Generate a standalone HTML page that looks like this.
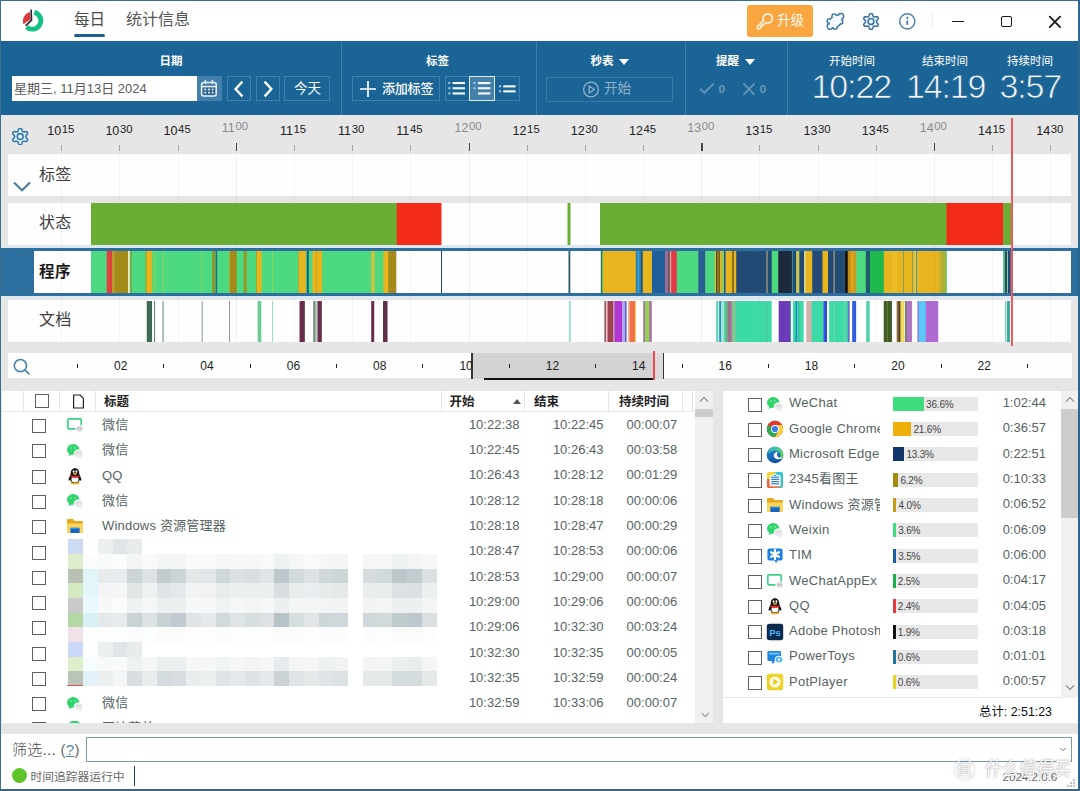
<!DOCTYPE html><html lang="zh-CN"><head><meta charset="utf-8"><title>ManicTime</title><style>

*{box-sizing:border-box;margin:0;padding:0}
html,body{width:1080px;height:791px;overflow:hidden;background:#e6e6e6}
body{font-family:"Liberation Sans", "Noto Sans CJK SC", sans-serif;position:relative;color:#333;font-size:13px}
.a{position:absolute}
.t{position:absolute;white-space:nowrap;line-height:1}
#titlebar{left:0;top:0;width:1080px;height:41px;background:#fff}
#toolbar{left:0;top:41px;width:1080px;height:74px;background:#1b6596}
.tl{position:absolute;color:#fff;font-size:11.5px;line-height:14px;white-space:nowrap;transform:translateX(-50%);font-weight:700}
.btn{position:absolute;border:1px solid #3f80ad;top:76px;height:24.9px}
.vsep{position:absolute;top:41px;width:1px;height:74px;background:#3f7fab}
.big{position:absolute;color:#f4f8fb;font-size:34px;line-height:32px;white-space:nowrap;top:70px;letter-spacing:-1.15px;font-weight:400;-webkit-text-stroke:0.75px #1b6596}
.row{position:absolute;left:8px;width:1063px;height:42px;background:#fefefe}
.rl{position:absolute;left:39px;font-size:16px;line-height:18px;color:#3e3e3e;white-space:nowrap;letter-spacing:0.2px}
.hr{position:absolute;font-size:12.5px;line-height:12px;color:#222;white-space:nowrap}
.hr i{font-style:normal;font-size:11.3px;position:relative;top:-1.8px;margin-left:0.6px}
.hr.g{color:#8a8a8a}
.tick{position:absolute;width:1px;background:#a6a6a6;top:145px;height:6px}
.grid{position:absolute;width:1px;background:rgba(0,0,0,0.035);top:154px;height:188px}
.seg{position:absolute;top:0;height:100%}
.mt{position:absolute;font-size:12px;line-height:12px;color:#222;top:360px;transform:translateX(-50%)}
.mtick{position:absolute;width:1px;height:4px;top:364px;background:#222}
.cb{position:absolute;width:14px;height:14px;border:1px solid #606060;background:#fff}
.cell{position:absolute;font-size:13px;line-height:16px;color:#566363;white-space:nowrap}
.cellr{position:absolute;font-size:13px;line-height:16px;color:#566363;white-space:nowrap;text-align:right;width:80px}
.th{position:absolute;font-size:12.5px;line-height:16px;color:#222;font-weight:700;white-space:nowrap;top:394px}
.csep{position:absolute;width:1px;top:391px;height:20px;background:#e4e4e4}
.pbar{position:absolute;left:893px;width:85px;height:14px;background:#e8e8e8}
.pfill{position:absolute;left:0;top:0;height:100%}
.ptxt{position:absolute;top:0;font-size:10px;line-height:15px;color:#444;white-space:nowrap;letter-spacing:-0.2px}

</style></head><body>
<div id="titlebar" class="a">
<svg class="a" style="left:20px;top:7px" width="27" height="27" viewBox="0 0 27 27">
<path d="M14.4 5.4 A8.5 8.5 0 1 1 6.6 19.9" fill="none" stroke="#12c282" stroke-width="4.8"/>
<path d="M3.4 17.2 C1.6 11.8 4.6 6.6 9.8 5 L10.6 12.4 Z" fill="#dc3b42"/>
<path d="M11.1 2.6 L11.5 13.2 L5.6 18.8" fill="none" stroke="#2c2636" stroke-width="1.7" stroke-linejoin="miter"/>
</svg>
<div class="t" style="left:74px;top:11px;font-size:15.5px;line-height:18px;color:#4a4a4a">每日</div>
<div class="a" style="left:74px;top:33.5px;width:31px;height:3.2px;border-radius:2px;background:#1d5f8f"></div>
<div class="t" style="left:126px;top:11px;font-size:16px;line-height:18px;color:#555">统计信息</div>
<div class="a" style="left:747px;top:5px;width:66px;height:32px;border-radius:3px;background:#f9a640"></div>
<svg class="a" style="left:756px;top:12px" width="18" height="18" viewBox="0 0 18 18" fill="none" stroke="#fff4e2" stroke-width="1.6" stroke-linecap="round" stroke-linejoin="round">
<path d="M7.6 8.4 A4.6 4.6 0 1 1 9.8 10.6 L8.4 12.2 L6.6 12.2 L6.6 14 L4.8 14 L4.8 15.8 L3.4 16.8 L1.4 16.8 L1.4 14.6 Z"/></svg>
<div class="t" style="left:777px;top:13px;font-size:13.5px;line-height:16px;color:#fff8ee">升级</div>
<svg class="a" style="left:826px;top:11.5px" width="19" height="19" viewBox="0 0 19 19"><g fill="#34709f" stroke="#34709f" stroke-width="3" stroke-linejoin="round"><circle cx="14.69" cy="9.86" r="1.35"/><circle cx="14.90" cy="4.29" r="1.95"/><circle cx="8.17" cy="4.16" r="1.35"/><circle cx="3.42" cy="8.97" r="1.45"/><circle cx="3.93" cy="14.52" r="1.95"/><circle cx="9.12" cy="14.99" r="1.35"/><ellipse cx="9.50" cy="9.50" rx="6.7" ry="4.3" transform="rotate(-44 9.50 9.50)"/><circle cx="9.50" cy="9.50" r="4.5"/></g><g fill="#f4fbfe" stroke="#f4fbfe" stroke-width="0.3"><circle cx="14.69" cy="9.86" r="1.35"/><circle cx="14.90" cy="4.29" r="1.95"/><circle cx="8.17" cy="4.16" r="1.35"/><circle cx="3.42" cy="8.97" r="1.45"/><circle cx="3.93" cy="14.52" r="1.95"/><circle cx="9.12" cy="14.99" r="1.35"/><ellipse cx="9.50" cy="9.50" rx="6.7" ry="4.3" transform="rotate(-44 9.50 9.50)"/><circle cx="9.50" cy="9.50" r="4.5"/></g></svg>
<svg class="a" style="left:862px;top:12.5px" width="18" height="17" viewBox="0 0 18 16.7" fill="#f2fafd" stroke="#34709f" stroke-width="1.5" stroke-linejoin="round"><path d="M14.40 8.35 L14.45 7.99 L14.64 7.61 L15.01 7.15 L15.52 6.60 L15.98 5.98 L16.22 5.36 L16.21 4.80 L16.01 4.30 L15.68 3.89 L15.20 3.60 L14.54 3.49 L13.77 3.58 L13.04 3.74 L12.46 3.84 L12.04 3.81 L11.70 3.67 L11.42 3.45 L11.18 3.09 L10.97 2.55 L10.75 1.83 L10.44 1.12 L10.02 0.61 L9.53 0.33 L9.00 0.25 L8.47 0.33 L7.98 0.61 L7.56 1.12 L7.25 1.83 L7.03 2.55 L6.82 3.09 L6.58 3.45 L6.30 3.67 L5.96 3.81 L5.54 3.84 L4.96 3.74 L4.23 3.58 L3.46 3.49 L2.80 3.60 L2.32 3.89 L1.99 4.30 L1.79 4.80 L1.78 5.36 L2.02 5.98 L2.48 6.60 L2.99 7.15 L3.36 7.61 L3.55 7.99 L3.60 8.35 L3.55 8.71 L3.36 9.09 L2.99 9.55 L2.48 10.10 L2.02 10.72 L1.78 11.34 L1.79 11.90 L1.99 12.40 L2.32 12.81 L2.80 13.10 L3.46 13.21 L4.23 13.12 L4.96 12.96 L5.54 12.86 L5.96 12.89 L6.30 13.03 L6.58 13.25 L6.82 13.61 L7.03 14.15 L7.25 14.87 L7.56 15.58 L7.98 16.09 L8.47 16.37 L9.00 16.45 L9.53 16.37 L10.02 16.09 L10.44 15.58 L10.75 14.87 L10.97 14.15 L11.18 13.61 L11.42 13.25 L11.70 13.03 L12.04 12.89 L12.46 12.86 L13.04 12.96 L13.77 13.12 L14.54 13.21 L15.20 13.10 L15.68 12.81 L16.01 12.40 L16.21 11.90 L16.22 11.34 L15.98 10.72 L15.52 10.10 L15.01 9.55 L14.64 9.09 L14.45 8.71 Z"/><circle cx="9" cy="8.35" r="2.9"/></svg>
<svg class="a" style="left:898px;top:12px" width="19" height="19" viewBox="0 0 19 19" fill="none" stroke="#4a82b0" stroke-width="1.5">
<circle cx="9.3" cy="9.3" r="7.6"/><path d="M9.3 8.6 L9.3 12.8" stroke-width="1.8" stroke="#3a76a8"/><circle cx="9.3" cy="5.9" r="1.05" fill="#3a76a8" stroke="none"/></svg>
<div class="a" style="left:932px;top:13px;width:1px;height:16px;background:#ececec"></div>
<div class="a" style="left:952px;top:21px;width:12px;height:1.4px;background:#1a1a1a"></div>
<div class="a" style="left:1001px;top:16px;width:11.4px;height:11.4px;border:1.7px solid #1a1a1a;border-radius:2px"></div>
<svg class="a" style="left:1048px;top:15px" width="14" height="14" viewBox="0 0 14 14" stroke="#1a1a1a" stroke-width="1.8" stroke-linecap="round"><path d="M1.7 1.7 L12.1 12.1 M12.1 1.7 L1.7 12.1"/></svg>
</div>
<div id="toolbar" class="a"></div>
<div class="vsep" style="left:341px"></div>
<div class="vsep" style="left:535.5px"></div>
<div class="vsep" style="left:684.5px"></div>
<div class="vsep" style="left:786.5px"></div>
<div class="tl" style="left:171px;top:54px">日期</div>
<div class="tl" style="left:437.5px;top:54px">标签</div>
<div class="tl" style="left:602px;top:54px">秒表</div>
<div class="a" style="left:619px;top:59px;width:0;height:0;border-left:5.5px solid transparent;border-right:5.5px solid transparent;border-top:6px solid #fff"></div>
<div class="tl" style="left:727.5px;top:54px">提醒</div>
<div class="a" style="left:744.5px;top:59px;width:0;height:0;border-left:5.5px solid transparent;border-right:5.5px solid transparent;border-top:6px solid #fff"></div>
<div class="tl" style="left:852px;top:54px;font-weight:400">开始时间</div>
<div class="tl" style="left:945px;top:54px;font-weight:400">结束时间</div>
<div class="tl" style="left:1030px;top:54px;font-weight:400">持续时间</div>
<div class="a" style="left:12px;top:76px;width:185px;height:25px;background:#fff"></div>
<div class="t" style="left:14px;top:81px;font-size:13px;line-height:16px;color:#5a5a5a;letter-spacing:0">星期三, 11月13日 2024</div>
<div class="a" style="left:197px;top:76px;width:25px;height:25px;background:#447fab"></div>
<svg class="a" style="left:200px;top:79px" width="18" height="19" viewBox="0 0 18 19" fill="none" stroke="#e8f1f8" stroke-width="1.5" stroke-linejoin="round">
<rect x="2.4" y="8" width="13" height="8.4" fill="#33668f" stroke="none"/><rect x="1.6" y="3.4" width="14.6" height="13.6" rx="2"/><path d="M1.6 7.6 L16.2 7.6"/><path d="M5.4 1.4 L5.4 4.6 M12.4 1.4 L12.4 4.6" stroke-linecap="round"/>
<g fill="#e8f1f8" stroke="none"><rect x="4.4" y="9.6" width="1.7" height="1.7"/><rect x="8.1" y="9.6" width="1.7" height="1.7"/><rect x="11.8" y="9.6" width="1.7" height="1.7"/><rect x="4.4" y="12.8" width="1.7" height="1.7"/><rect x="8.1" y="12.8" width="1.7" height="1.7"/><rect x="11.8" y="12.8" width="1.7" height="1.7"/></g></svg>
<div class="btn" style="left:227px;width:24px"></div>
<svg class="a" style="left:227px;top:76px" width="24" height="26" viewBox="0 0 24 26" fill="none" stroke="#fff" stroke-width="2.3"><path d="M15.4 5.6 L8.6 13 L15.4 20.4"/></svg>
<div class="btn" style="left:255.5px;width:24px"></div>
<svg class="a" style="left:255.5px;top:76px" width="24" height="26" viewBox="0 0 24 26" fill="none" stroke="#fff" stroke-width="2.3"><path d="M8.6 5.6 L15.4 13 L8.6 20.4"/></svg>
<div class="btn" style="left:284px;width:46px"></div>
<div class="t" style="left:294px;top:81px;font-size:13.5px;line-height:16px;color:#fff">今天</div>
<div class="btn" style="left:352px;width:88px"></div>
<svg class="a" style="left:359px;top:80px" width="18" height="18" viewBox="0 0 18 18" stroke="#fff" stroke-width="1.7"><path d="M9 1 L9 17 M1 9 L17 9"/></svg>
<div class="t" style="left:382px;top:81px;font-size:13px;line-height:16px;color:#fff;font-weight:500;letter-spacing:-0.2px">添加标签</div>
<div class="btn" style="left:444.5px;width:75px"></div>
<div class="a" style="left:469px;top:76px;width:26px;height:24.9px;border:1.6px solid #dcebf4;background:#4580aa"></div>
<svg class="a" style="left:0;top:0" width="540" height="110" viewBox="0 0 540 110" fill="#f4f9fc"><rect x="448.3" y="82" width="2" height="2" fill="#a6cfee"/><rect x="452.6" y="82" width="12.4" height="2.1"/><rect x="448.3" y="87.2" width="2" height="2" fill="#a6cfee"/><rect x="452.6" y="87.2" width="12.4" height="2.1"/><rect x="448.3" y="92.4" width="2" height="2" fill="#a6cfee"/><rect x="452.6" y="92.4" width="12.4" height="2.1"/></svg>
<svg class="a" style="left:0;top:0" width="540" height="110" viewBox="0 0 540 110" fill="#f4f9fc"><rect x="473.5" y="82" width="2" height="2" fill="#a6cfee"/><rect x="478" y="82" width="12.4" height="2.1"/><rect x="473.5" y="87.2" width="2" height="2" fill="#a6cfee"/><rect x="478" y="87.2" width="12.4" height="2.1"/><rect x="478" y="92.4" width="12.4" height="2.1"/></svg>
<svg class="a" style="left:0;top:0" width="540" height="110" viewBox="0 0 540 110" fill="#f4f9fc"><rect x="499" y="85.3" width="2" height="2" fill="#a6cfee"/><rect x="503.2" y="85.3" width="12.4" height="2.1"/><rect x="499" y="90.3" width="2" height="2" fill="#a6cfee"/><rect x="503.2" y="90.3" width="12.4" height="2.1"/></svg>
<div class="btn" style="left:546px;top:77.4px;width:127px;height:24.3px;border-color:#3a79a6"></div>
<svg class="a" style="left:582px;top:80px" width="19" height="19" viewBox="0 0 19 19" fill="none" stroke="#8fb2cc" stroke-width="1.3"><circle cx="9" cy="9.5" r="7.4"/><path d="M7.2 6 L12.4 9.5 L7.2 13 Z" stroke-linejoin="round"/></svg>
<div class="t" style="left:604px;top:81px;font-size:13.5px;line-height:16px;color:#8fb2cc">开始</div>
<svg class="a" style="left:699px;top:82px" width="17" height="13" viewBox="0 0 17 13" fill="none" stroke="#6594b8" stroke-width="1.9"><path d="M1.2 6.8 L5.4 10.8 L14.8 1.6"/></svg>
<div class="t" style="left:718.6px;top:82.3px;font-size:11.8px;line-height:14px;color:#6c98b9;font-weight:700">0</div>
<svg class="a" style="left:742.4px;top:82px" width="14" height="14" viewBox="0 0 14 14" fill="none" stroke="#6594b8" stroke-width="1.9"><path d="M1.4 1.4 L12.6 12.8 M12.6 1.4 L1.4 12.8"/></svg>
<div class="t" style="left:759.4px;top:82.3px;font-size:11.8px;line-height:14px;color:#6c98b9;font-weight:700">0</div>
<div class="big" style="left:811.6px">10:22</div>
<div class="big" style="left:906px">14:19</div>
<div class="big" style="left:999.4px">3:57</div>
<svg class="a" style="left:11px;top:127.6px" width="18.4" height="17.2" viewBox="0 0 18 16.7" fill="#e2f1fa" stroke="#3577aa" stroke-width="1.55" stroke-linejoin="round"><path d="M14.40 8.35 L14.45 7.99 L14.64 7.61 L15.01 7.15 L15.52 6.60 L15.98 5.98 L16.22 5.36 L16.21 4.80 L16.01 4.30 L15.68 3.89 L15.20 3.60 L14.54 3.49 L13.77 3.58 L13.04 3.74 L12.46 3.84 L12.04 3.81 L11.70 3.67 L11.42 3.45 L11.18 3.09 L10.97 2.55 L10.75 1.83 L10.44 1.12 L10.02 0.61 L9.53 0.33 L9.00 0.25 L8.47 0.33 L7.98 0.61 L7.56 1.12 L7.25 1.83 L7.03 2.55 L6.82 3.09 L6.58 3.45 L6.30 3.67 L5.96 3.81 L5.54 3.84 L4.96 3.74 L4.23 3.58 L3.46 3.49 L2.80 3.60 L2.32 3.89 L1.99 4.30 L1.79 4.80 L1.78 5.36 L2.02 5.98 L2.48 6.60 L2.99 7.15 L3.36 7.61 L3.55 7.99 L3.60 8.35 L3.55 8.71 L3.36 9.09 L2.99 9.55 L2.48 10.10 L2.02 10.72 L1.78 11.34 L1.79 11.90 L1.99 12.40 L2.32 12.81 L2.80 13.10 L3.46 13.21 L4.23 13.12 L4.96 12.96 L5.54 12.86 L5.96 12.89 L6.30 13.03 L6.58 13.25 L6.82 13.61 L7.03 14.15 L7.25 14.87 L7.56 15.58 L7.98 16.09 L8.47 16.37 L9.00 16.45 L9.53 16.37 L10.02 16.09 L10.44 15.58 L10.75 14.87 L10.97 14.15 L11.18 13.61 L11.42 13.25 L11.70 13.03 L12.04 12.89 L12.46 12.86 L13.04 12.96 L13.77 13.12 L14.54 13.21 L15.20 13.10 L15.68 12.81 L16.01 12.40 L16.21 11.90 L16.22 11.34 L15.98 10.72 L15.52 10.10 L15.01 9.55 L14.64 9.09 L14.45 8.71 Z"/><circle cx="9" cy="8.35" r="2.9"/></svg>
<div class="hr" style="left:47.2px;top:124.5px">10<i>15</i></div>
<div class="tick" style="left:61.2px"></div>
<div class="hr" style="left:105.4px;top:124.5px">10<i>30</i></div>
<div class="tick" style="left:119.4px"></div>
<div class="hr" style="left:163.6px;top:124.5px">10<i>45</i></div>
<div class="tick" style="left:177.6px"></div>
<div class="hr g" style="left:221.8px;top:122px">11<i>00</i></div>
<div class="tick" style="left:235.8px;top:143px;height:8px;background:#444;width:1.4px"></div>
<div class="hr" style="left:279.9px;top:124.5px">11<i>15</i></div>
<div class="tick" style="left:293.9px"></div>
<div class="hr" style="left:338.1px;top:124.5px">11<i>30</i></div>
<div class="tick" style="left:352.1px"></div>
<div class="hr" style="left:396.3px;top:124.5px">11<i>45</i></div>
<div class="tick" style="left:410.3px"></div>
<div class="hr g" style="left:454.5px;top:122px">12<i>00</i></div>
<div class="tick" style="left:468.5px;top:143px;height:8px;background:#444;width:1.4px"></div>
<div class="hr" style="left:512.6px;top:124.5px">12<i>15</i></div>
<div class="tick" style="left:526.6px"></div>
<div class="hr" style="left:570.8px;top:124.5px">12<i>30</i></div>
<div class="tick" style="left:584.8px"></div>
<div class="hr" style="left:629.0px;top:124.5px">12<i>45</i></div>
<div class="tick" style="left:643.0px"></div>
<div class="hr g" style="left:687.2px;top:122px">13<i>00</i></div>
<div class="tick" style="left:701.2px;top:143px;height:8px;background:#444;width:1.4px"></div>
<div class="hr" style="left:745.3px;top:124.5px">13<i>15</i></div>
<div class="tick" style="left:759.3px"></div>
<div class="hr" style="left:803.5px;top:124.5px">13<i>30</i></div>
<div class="tick" style="left:817.5px"></div>
<div class="hr" style="left:861.7px;top:124.5px">13<i>45</i></div>
<div class="tick" style="left:875.7px"></div>
<div class="hr g" style="left:919.8px;top:122px">14<i>00</i></div>
<div class="tick" style="left:933.8px;top:143px;height:8px;background:#444;width:1.4px"></div>
<div class="hr" style="left:978.0px;top:124.5px">14<i>15</i></div>
<div class="tick" style="left:992.0px"></div>
<div class="hr" style="left:1036.2px;top:124.5px">14<i>30</i></div>
<div class="tick" style="left:1050.2px"></div>
<div class="a" style="left:0;top:245px;width:1080px;height:3px;background:#dde7f0"></div>
<div class="a" style="left:0;top:247.7px;width:1080px;height:48.3px;background:#2d6f9f"></div>
<div class="a" style="left:0;top:296px;width:1080px;height:2.5px;background:#dde7f0"></div>
<div class="row" style="top:154px"></div>
<div class="row" style="top:202.5px"></div>
<div class="row" style="top:251px;left:34px;width:1037px;height:42.3px"></div>
<div class="row" style="top:299.5px;height:42.5px"></div>
<div class="rl" style="top:165.6px">标签</div>
<div class="rl" style="top:214.1px">状态</div>
<div class="rl" style="top:262.8px;font-weight:700;color:#1a1a1a;font-size:15.5px;letter-spacing:0.6px">程序</div>
<div class="rl" style="top:311.1px">文档</div>
<svg class="a" style="left:13px;top:181px" width="18" height="11" viewBox="0 0 18 11" fill="none" stroke="#4a7c9f" stroke-width="2.1"><path d="M1 1.4 L9 9.2 L17 1.4"/></svg>
<div class="grid" style="left:61.2px"></div>
<div class="grid" style="left:119.4px"></div>
<div class="grid" style="left:177.6px"></div>
<div class="grid" style="left:235.8px;background:rgba(0,0,0,0.06)"></div>
<div class="grid" style="left:293.9px"></div>
<div class="grid" style="left:352.1px"></div>
<div class="grid" style="left:410.3px"></div>
<div class="grid" style="left:468.5px;background:rgba(0,0,0,0.06)"></div>
<div class="grid" style="left:526.6px"></div>
<div class="grid" style="left:584.8px"></div>
<div class="grid" style="left:643.0px"></div>
<div class="grid" style="left:701.2px;background:rgba(0,0,0,0.06)"></div>
<div class="grid" style="left:759.3px"></div>
<div class="grid" style="left:817.5px"></div>
<div class="grid" style="left:875.7px"></div>
<div class="grid" style="left:933.8px;background:rgba(0,0,0,0.06)"></div>
<div class="grid" style="left:992.0px"></div>
<div class="grid" style="left:1050.2px"></div>
<svg class="a" style="left:0;top:202.5px;" width="1080" height="42" viewBox="0 0 1080 42"><rect x="91" y="0" width="306.2" height="42" fill="#6aae35"/><rect x="396.7" y="0" width="44.8" height="42" fill="#f12b17"/><rect x="567.5" y="0" width="3" height="42" fill="#6aae35"/><rect x="600" y="0" width="347" height="42" fill="#6aae35"/><rect x="946.5" y="0" width="57.2" height="42" fill="#f12b17"/><rect x="1003.2" y="0" width="8.3" height="42" fill="#6aae35"/></svg>
<svg class="a" style="left:0;top:250.8px;" width="1080" height="42.5" viewBox="0 0 1080 42.5"><rect x="91" y="0" width="305.2" height="42.5" fill="#4dd97f"/><rect x="106.7" y="0" width="5.8" height="42.5" fill="#e0413f"/><rect x="112" y="0" width="3.5" height="42.5" fill="#b59c2c"/><rect x="115" y="0" width="13.5" height="42.5" fill="#a58a1a"/><rect x="128" y="0" width="1.7" height="42.5" fill="#f2edc8"/><rect x="130.6" y="0" width="1" height="42.5" fill="#a58a1a"/><rect x="145.6" y="0" width="1.5" height="42.5" fill="#9a9a30"/><rect x="146.6" y="0" width="5.6" height="42.5" fill="#e9b51f"/><rect x="154.4" y="0" width="0.8" height="42.5" fill="#9fcf5a"/><rect x="163" y="0" width="0.8" height="42.5" fill="#9fcf5a"/><rect x="201.4" y="0" width="0.8" height="42.5" fill="#9fcf5a"/><rect x="212" y="0" width="3.2" height="42.5" fill="#8f9a2a"/><rect x="215.6" y="0" width="1.6" height="42.5" fill="#236a98"/><rect x="229.2" y="0" width="1.1" height="42.5" fill="#c8b030"/><rect x="229.8" y="0" width="6.9" height="42.5" fill="#a58a1a"/><rect x="243.6" y="0" width="3.2" height="42.5" fill="#8f9a2a"/><rect x="256" y="0" width="1.3" height="42.5" fill="#a0a030"/><rect x="256.8" y="0" width="4.9" height="42.5" fill="#e9b51f"/><rect x="272.2" y="0" width="0.8" height="42.5" fill="#a8cf50"/><rect x="298.2" y="0" width="1.3" height="42.5" fill="#b8a830"/><rect x="299" y="0" width="6.8" height="42.5" fill="#e9b51f"/><rect x="306.8" y="0" width="2" height="42.5" fill="#1d5a80"/><rect x="312.5" y="0" width="9.7" height="42.5" fill="#e9b51f"/><rect x="316" y="0" width="0.9" height="42.5" fill="#d89a18"/><rect x="371.2" y="0" width="3.5" height="42.5" fill="#cfc23c"/><rect x="383.3" y="0" width="5.5" height="42.5" fill="#e9b51f"/><rect x="388.3" y="0" width="7.9" height="42.5" fill="#a58a1a"/><rect x="441" y="0" width="1" height="42.5" fill="#2a4a60"/><rect x="568.5" y="0" width="1.8" height="42.5" fill="#2a5a6a"/><rect x="600.8" y="0" width="2.1" height="42.5" fill="#1f7a5a"/><rect x="602.4" y="0" width="1.7" height="42.5" fill="#b8c840"/><rect x="603.6" y="0" width="32.7" height="42.5" fill="#e9b51f"/><rect x="635.8" y="0" width="5.7" height="42.5" fill="#2a7fb5"/><rect x="637.6" y="0" width="1.8" height="42.5" fill="#3f9fd0"/><rect x="641" y="0" width="2.1" height="42.5" fill="#24506e"/><rect x="642.6" y="0" width="1.3" height="42.5" fill="#c8a838"/><rect x="643.4" y="0" width="9.1" height="42.5" fill="#e9b51f"/><rect x="652" y="0" width="13.5" height="42.5" fill="#1f5f9b"/><rect x="665" y="0" width="3.8" height="42.5" fill="#a06a8c"/><rect x="668.3" y="0" width="1.8" height="42.5" fill="#4a4050"/><rect x="669.6" y="0" width="2.1" height="42.5" fill="#d9a0a0"/><rect x="671.2" y="0" width="6" height="42.5" fill="#e63946"/><rect x="676.7" y="0" width="22.1" height="42.5" fill="#4dd97f"/><rect x="698.3" y="0" width="7.5" height="42.5" fill="#265f8f"/><rect x="705.3" y="0" width="10" height="42.5" fill="#4dd97f"/><rect x="714.8" y="0" width="1.7" height="42.5" fill="#d0c040"/><rect x="716" y="0" width="4.3" height="42.5" fill="#5a4a1a"/><rect x="717.6" y="0" width="0.8" height="42.5" fill="#e0c030"/><rect x="719.8" y="0" width="2.2" height="42.5" fill="#e9b51f"/><rect x="721.5" y="0" width="3" height="42.5" fill="#8cc860"/><rect x="724" y="0" width="2.1" height="42.5" fill="#2a5a80"/><rect x="725.6" y="0" width="7.3" height="42.5" fill="#e9b51f"/><rect x="732.4" y="0" width="1.7" height="42.5" fill="#4a4020"/><rect x="733.6" y="0" width="3.1" height="42.5" fill="#e9b51f"/><rect x="736.2" y="0" width="36" height="42.5" fill="#234a75"/><rect x="766.5" y="0" width="1" height="42.5" fill="#c8b070"/><rect x="771.7" y="0" width="7" height="42.5" fill="#4dd97f"/><rect x="778.2" y="0" width="14" height="42.5" fill="#1c2a3c"/><rect x="791.7" y="0" width="5" height="42.5" fill="#234a75"/><rect x="792.2" y="0" width="0.8" height="42.5" fill="#3aa090"/><rect x="796.2" y="0" width="3.6" height="42.5" fill="#c8c850"/><rect x="799.3" y="0" width="5.4" height="42.5" fill="#234a75"/><rect x="804.2" y="0" width="1.8" height="42.5" fill="#f0e0a0"/><rect x="805.5" y="0" width="7.2" height="42.5" fill="#e9b51f"/><rect x="812.2" y="0" width="10.8" height="42.5" fill="#234a75"/><rect x="822.5" y="0" width="6" height="42.5" fill="#e9b51f"/><rect x="828" y="0" width="16.4" height="42.5" fill="#234a75"/><rect x="833.6" y="0" width="1" height="42.5" fill="#c8b070"/><rect x="843.9" y="0" width="1.3" height="42.5" fill="#4a6a8a"/><rect x="844.7" y="0" width="3.6" height="42.5" fill="#161616"/><rect x="847.8" y="0" width="3.2" height="42.5" fill="#c48a18"/><rect x="850.5" y="0" width="3.5" height="42.5" fill="#dca41c"/><rect x="853.5" y="0" width="3.3" height="42.5" fill="#cf9a20"/><rect x="856.3" y="0" width="10" height="42.5" fill="#4dd97f"/><rect x="865.8" y="0" width="4.7" height="42.5" fill="#1f5a6c"/><rect x="870" y="0" width="14.3" height="42.5" fill="#1fb84c"/><rect x="883.8" y="0" width="55" height="42.5" fill="#e9b51f"/><rect x="893" y="0" width="0.8" height="42.5" fill="#f0c840"/><rect x="895.6" y="0" width="0.8" height="42.5" fill="#f0c840"/><rect x="903" y="0" width="0.8" height="42.5" fill="#6aa070"/><rect x="912.2" y="0" width="0.8" height="42.5" fill="#6aa070"/><rect x="914" y="0" width="2.5" height="42.5" fill="#d8c850"/><rect x="916" y="0" width="0.8" height="42.5" fill="#3a90a0"/><rect x="934" y="0" width="1" height="42.5" fill="#d8a820"/><rect x="938.3" y="0" width="4.2" height="42.5" fill="#c8b028"/><rect x="942" y="0" width="4.3" height="42.5" fill="#a8b038"/><rect x="945.8" y="0" width="1" height="42.5" fill="#5fd070"/><rect x="1003.2" y="0" width="2.3" height="42.5" fill="#46b494"/><rect x="1005" y="0" width="2" height="42.5" fill="#1f5a4a"/><rect x="1007.6" y="0" width="3.2" height="42.5" fill="#234a75"/></svg>
<svg class="a" style="left:0;top:300.6px;" width="1080" height="41.6" viewBox="0 0 1080 41.6"><rect x="146.7" y="0" width="5.3" height="41.6" fill="#3f6b56"/><rect x="154.2" y="0" width="0.8" height="41.6" fill="#3a5a4a"/><rect x="162.4" y="0" width="1.2" height="41.6" fill="#7a9a8a"/><rect x="201.6" y="0" width="1" height="41.6" fill="#8a9a92"/><rect x="229.2" y="0" width="0.8" height="41.6" fill="#8a6a88"/><rect x="257.6" y="0" width="3.7" height="41.6" fill="#6dce95"/><rect x="272.2" y="0" width="0.8" height="41.6" fill="#7fd6a4"/><rect x="299.5" y="0" width="5.3" height="41.6" fill="#6a2d4c"/><rect x="313.2" y="0" width="2.7" height="41.6" fill="#6f8f7a"/><rect x="315.4" y="0" width="1.9" height="41.6" fill="#c8d8cc"/><rect x="316.8" y="0" width="1.7" height="41.6" fill="#9a8f98"/><rect x="318" y="0" width="3.8" height="41.6" fill="#6a2d4c"/><rect x="371.2" y="0" width="3" height="41.6" fill="#6a2d4c"/><rect x="383" y="0" width="4.5" height="41.6" fill="#5c3046"/><rect x="569.2" y="0" width="1.4" height="41.6" fill="#6fd8c2"/><rect x="604.4" y="0" width="2.1" height="41.6" fill="#8a5a68"/><rect x="606" y="0" width="2.1" height="41.6" fill="#f0c0c8"/><rect x="607.6" y="0" width="5.9" height="41.6" fill="#a0414f"/><rect x="613" y="0" width="2.2" height="41.6" fill="#c090b8"/><rect x="614.7" y="0" width="7.8" height="41.6" fill="#b035d2"/><rect x="622" y="0" width="3.5" height="41.6" fill="#b4a4f2"/><rect x="625" y="0" width="1.6" height="41.6" fill="#5f62c2"/><rect x="628" y="0" width="2.1" height="41.6" fill="#f2b896"/><rect x="629.6" y="0" width="5.9" height="41.6" fill="#f0714f"/><rect x="635" y="0" width="1.2" height="41.6" fill="#f4d860"/><rect x="643.3" y="0" width="2.2" height="41.6" fill="#a070a2"/><rect x="645" y="0" width="4.7" height="41.6" fill="#92d052"/><rect x="649.2" y="0" width="2.6" height="41.6" fill="#a872a0"/><rect x="716.2" y="0" width="2.2" height="41.6" fill="#5fd2b2"/><rect x="719.2" y="0" width="2.5" height="41.6" fill="#2f8fc2"/><rect x="721.2" y="0" width="3.3" height="41.6" fill="#a2e8e0"/><rect x="724" y="0" width="2" height="41.6" fill="#4ad8ac"/><rect x="725.5" y="0" width="2.8" height="41.6" fill="#70b082"/><rect x="727.8" y="0" width="4.4" height="41.6" fill="#a07292"/><rect x="731.7" y="0" width="4.6" height="41.6" fill="#82c492"/><rect x="735.8" y="0" width="35.9" height="41.6" fill="#3cdaa6"/><rect x="767" y="0" width="0.8" height="41.6" fill="#58c0a0"/><rect x="755" y="0" width="0.6" height="41.6" fill="#46dcaa"/><rect x="778.7" y="0" width="11.8" height="41.6" fill="#6a3ab8"/><rect x="790" y="0" width="1" height="41.6" fill="#3a9a8a"/><rect x="793" y="0" width="10.7" height="41.6" fill="#3cdaa6"/><rect x="795.6" y="0" width="1.4" height="41.6" fill="#2080d2"/><rect x="798.4" y="0" width="0.8" height="41.6" fill="#36a890"/><rect x="806.3" y="0" width="5.9" height="41.6" fill="#d2b2aa"/><rect x="811.7" y="0" width="12.1" height="41.6" fill="#3cdaa6"/><rect x="823.3" y="0" width="1.8" height="41.6" fill="#5672d2"/><rect x="824.6" y="0" width="2.4" height="41.6" fill="#2040e2"/><rect x="829.2" y="0" width="18.8" height="41.6" fill="#3cdaa6"/><rect x="833.8" y="0" width="0.8" height="41.6" fill="#8ad8a8"/><rect x="844.3" y="0" width="0.8" height="41.6" fill="#8ad8a8"/><rect x="847.8" y="0" width="1.9" height="41.6" fill="#6272c4"/><rect x="852.2" y="0" width="4" height="41.6" fill="#3060e2"/><rect x="866.2" y="0" width="3.5" height="41.6" fill="#52d2aa"/><rect x="883.8" y="0" width="8.2" height="41.6" fill="#3f5a25"/><rect x="886.8" y="0" width="1.4" height="41.6" fill="#5a7a30"/><rect x="896.7" y="0" width="2.3" height="41.6" fill="#907040"/><rect x="898.5" y="0" width="2.5" height="41.6" fill="#504020"/><rect x="900.5" y="0" width="4" height="41.6" fill="#f2da62"/><rect x="905" y="0" width="2.5" height="41.6" fill="#708282"/><rect x="907" y="0" width="5" height="41.6" fill="#b272c2"/><rect x="917.4" y="0" width="2.1" height="41.6" fill="#8f80e2"/><rect x="919" y="0" width="7.3" height="41.6" fill="#5cc8f8"/><rect x="925.8" y="0" width="12.5" height="41.6" fill="#b068d2"/><rect x="1005" y="0" width="0.8" height="41.6" fill="#5ab8b0"/><rect x="1006.8" y="0" width="3.4" height="41.6" fill="#40a8a0"/></svg>
<div class="a" style="left:1010.5px;top:117.5px;width:2px;height:228px;background:#ea5a5e"></div>
<div class="a" style="left:8px;top:353px;width:1063.5px;height:25.2px;background:#fefefe"></div>
<div class="a" style="left:472px;top:352.5px;width:192px;height:26.5px;background:#d2d2d2"></div>
<div class="a" style="left:654.5px;top:352.5px;width:9.5px;height:26.5px;background:#dadada"></div>
<div class="a" style="left:483.5px;top:378px;width:170.5px;height:2.2px;background:#111"></div>
<div class="a" style="left:471.4px;top:352.5px;width:1.5px;height:26px;background:#333"></div>
<div class="a" style="left:662.6px;top:352.5px;width:1.5px;height:26px;background:#333"></div>
<div class="a" style="left:653.2px;top:350.5px;width:1.5px;height:29.5px;background:#f0484d"></div>
<div class="mtick" style="left:77.0px"></div>
<div class="mt" style="left:120.7px">02</div>
<div class="mtick" style="left:163.3px"></div>
<div class="mt" style="left:207.0px">04</div>
<div class="mtick" style="left:249.7px"></div>
<div class="mt" style="left:293.4px">06</div>
<div class="mtick" style="left:336.1px"></div>
<div class="mt" style="left:379.7px">08</div>
<div class="mtick" style="left:422.4px"></div>
<div class="mt" style="left:466.1px">10</div>
<div class="mtick" style="left:508.8px"></div>
<div class="mt" style="left:552.5px">12</div>
<div class="mtick" style="left:595.1px"></div>
<div class="mt" style="left:638.8px">14</div>
<div class="mtick" style="left:681.5px"></div>
<div class="mt" style="left:725.2px">16</div>
<div class="mtick" style="left:767.9px"></div>
<div class="mt" style="left:811.5px">18</div>
<div class="mtick" style="left:854.2px"></div>
<div class="mt" style="left:897.9px">20</div>
<div class="mtick" style="left:940.6px"></div>
<div class="mt" style="left:984.3px">22</div>
<div class="mtick" style="left:1026.9px"></div>
<svg class="a" style="left:12px;top:358px" width="19" height="17" viewBox="0 0 19 17" fill="none" stroke="#4a86ae" stroke-width="1.7" stroke-linecap="round"><circle cx="8.4" cy="7.6" r="6.1"/><path d="M12.8 12 L17 15.8"/></svg>
<div class="a" style="left:2px;top:391px;width:711px;height:332px;background:#fff;overflow:hidden" id="ltab">
</div>
<div class="a" style="left:2px;top:411px;width:692px;height:1px;background:#e8e8e8"></div>
<div class="csep" style="left:22.5px"></div>
<div class="csep" style="left:58.5px"></div>
<div class="csep" style="left:94.5px"></div>
<div class="csep" style="left:440.5px"></div>
<div class="csep" style="left:524px"></div>
<div class="csep" style="left:607.8px"></div>
<div class="csep" style="left:681.5px"></div>
<div class="csep" style="left:692.3px"></div>
<div class="cb" style="left:35px;top:394.3px"></div>
<svg class="a" style="left:72px;top:394px" width="13" height="15" viewBox="0 0 13 15" fill="none" stroke="#222" stroke-width="1.2" stroke-linejoin="round"><path d="M1.6 1 L8 1 L11.4 4.4 L11.4 14 L1.6 14 Z"/></svg>
<div class="th" style="left:104px">标题</div>
<div class="th" style="left:449.5px">开始</div>
<div class="th" style="left:534px">结束</div>
<div class="th" style="left:619px">持续时间</div>
<div class="a" style="left:513px;top:399px;width:0;height:0;border-left:4.5px solid transparent;border-right:4.5px solid transparent;border-bottom:5px solid #555"></div>
<div class="a" style="left:695px;top:391px;width:18px;height:332px;background:#f0f0f0"></div>
<div class="a" style="left:695px;top:409px;width:18px;height:8.3px;background:#cdcdcd"></div>
<svg class="a" style="left:699px;top:396px" width="10" height="7" viewBox="0 0 10 7" fill="none" stroke="#8a8a8a" stroke-width="1.2"><path d="M1 5.6 L5 1.6 L9 5.6"/></svg>
<svg class="a" style="left:700.5px;top:711.5px" width="8.5" height="6" viewBox="0 0 10 7" fill="none" stroke="#8a8a8a" stroke-width="1.2"><path d="M1 1.4 L5 5.4 L9 1.4"/></svg>
<div class="cb" style="left:31.7px;top:418.9px"></div>
<svg class="a" style="left:66px;top:416.25px" width="18" height="18" viewBox="0 0 18 18"><rect x="1.8" y="2.8" width="13.4" height="10" rx="1.2" fill="#fff" stroke="#3ccf86" stroke-width="1.7"/><ellipse cx="13.6" cy="12.8" rx="3.8" ry="3.4" fill="#d8d8d8" stroke="#fff" stroke-width="1"/><circle cx="12.4" cy="12.4" r="0.5" fill="#999"/><circle cx="14.8" cy="12.4" r="0.5" fill="#999"/></svg>
<div class="cell" style="left:102px;top:416.9px;letter-spacing:0.2px">微信</div>
<div class="cellr" style="left:439.5px;top:416.8px">10:22:38</div>
<div class="cellr" style="left:523.5px;top:416.8px">10:22:45</div>
<div class="cellr" style="left:597.2px;top:416.8px">00:00:07</div>
<div class="cb" style="left:31.7px;top:444.3px"></div>
<svg class="a" style="left:66px;top:441.56px" width="18" height="18" viewBox="0 0 18 18"><ellipse cx="7.2" cy="7.4" rx="6.2" ry="5.3" fill="#2fd46c"/><path d="M3.4 11 L2.6 14 L6 12.4 Z" fill="#2fd46c"/><ellipse cx="12.6" cy="11.6" rx="4.4" ry="3.8" fill="#e9e9e9" stroke="#fff" stroke-width="0.8"/><path d="M14.6 14.4 L16 16.4 L12.6 15.2 Z" fill="#e4e4e4"/><circle cx="11.2" cy="10.8" r="0.6" fill="#b8b8b8"/><circle cx="14" cy="10.8" r="0.6" fill="#b8b8b8"/><circle cx="5" cy="6" r="0.7" fill="#bff3d2"/><circle cx="9" cy="6" r="0.7" fill="#bff3d2"/></svg>
<div class="cell" style="left:102px;top:442.3px;letter-spacing:0.2px">微信</div>
<div class="cellr" style="left:439.5px;top:442.1px">10:22:45</div>
<div class="cellr" style="left:523.5px;top:442.1px">10:26:43</div>
<div class="cellr" style="left:597.2px;top:442.1px">00:03:58</div>
<div class="cb" style="left:31.7px;top:469.6px"></div>
<svg class="a" style="left:66px;top:466.87px" width="18" height="18" viewBox="0 0 18 18"><ellipse cx="9" cy="16" rx="4.6" ry="1.4" fill="#f5b415"/><path d="M9 1.2 C6 1.2 4.8 3.6 4.8 6 C4.8 8 3 9.8 2.6 12.6 C2.4 14 3.4 14 4.2 12.8 C4.6 14.6 6.4 16 9 16 C11.6 16 13.4 14.6 13.8 12.8 C14.6 14 15.6 14 15.4 12.6 C15 9.8 13.2 8 13.2 6 C13.2 3.6 12 1.2 9 1.2 Z" fill="#141414"/><ellipse cx="9" cy="12.2" rx="3.5" ry="3.3" fill="#fff"/><path d="M4.6 8.2 C7 9.6 11 9.6 13.4 8.2 L13.6 10 C11 11.2 7 11.2 4.4 10 Z" fill="#e2231a"/><ellipse cx="7.6" cy="4.6" rx="0.9" ry="1.3" fill="#fff"/><ellipse cx="10.4" cy="4.6" rx="0.9" ry="1.3" fill="#fff"/><ellipse cx="9" cy="6.9" rx="2.2" ry="0.8" fill="#f5a915"/></svg>
<div class="cell" style="left:102px;top:467.6px;letter-spacing:0.2px">QQ</div>
<div class="cellr" style="left:439.5px;top:467.4px">10:26:43</div>
<div class="cellr" style="left:523.5px;top:467.4px">10:28:12</div>
<div class="cellr" style="left:597.2px;top:467.4px">00:01:29</div>
<div class="cb" style="left:31.7px;top:494.9px"></div>
<svg class="a" style="left:66px;top:492.18px" width="18" height="18" viewBox="0 0 18 18"><ellipse cx="7.2" cy="7.4" rx="6.2" ry="5.3" fill="#2fd46c"/><path d="M3.4 11 L2.6 14 L6 12.4 Z" fill="#2fd46c"/><ellipse cx="12.6" cy="11.6" rx="4.4" ry="3.8" fill="#e9e9e9" stroke="#fff" stroke-width="0.8"/><path d="M14.6 14.4 L16 16.4 L12.6 15.2 Z" fill="#e4e4e4"/><circle cx="11.2" cy="10.8" r="0.6" fill="#b8b8b8"/><circle cx="14" cy="10.8" r="0.6" fill="#b8b8b8"/><circle cx="5" cy="6" r="0.7" fill="#bff3d2"/><circle cx="9" cy="6" r="0.7" fill="#bff3d2"/></svg>
<div class="cell" style="left:102px;top:492.9px;letter-spacing:0.2px">微信</div>
<div class="cellr" style="left:439.5px;top:492.7px">10:28:12</div>
<div class="cellr" style="left:523.5px;top:492.7px">10:28:18</div>
<div class="cellr" style="left:597.2px;top:492.7px">00:00:06</div>
<div class="cb" style="left:31.7px;top:520.2px"></div>
<svg class="a" style="left:66px;top:517.49px" width="18" height="18" viewBox="0 0 18 18"><path d="M1 3 Q1 2 2 2 L7 2 L8.6 4 L16 4 Q17 4 17 5 L17 15 Q17 16 16 16 L2 16 Q1 16 1 15 Z" fill="#e9a91c"/><path d="M1 6.4 L17 6.4 L17 15 Q17 16 16 16 L2 16 Q1 16 1 15 Z" fill="#fbd45e"/><rect x="4.4" y="10.8" width="9.2" height="5.2" fill="#1565c0"/><rect x="4.4" y="10.8" width="9.2" height="1.4" fill="#2f8fe0"/></svg>
<div class="cell" style="left:102px;top:518.2px;letter-spacing:0.2px">Windows 资源管理器</div>
<div class="cellr" style="left:439.5px;top:518.0px">10:28:18</div>
<div class="cellr" style="left:523.5px;top:518.0px">10:28:47</div>
<div class="cellr" style="left:597.2px;top:518.0px">00:00:29</div>
<div class="cb" style="left:31.7px;top:545.5px"></div>
<div class="cellr" style="left:439.5px;top:543.3px">10:28:47</div>
<div class="cellr" style="left:523.5px;top:543.3px">10:28:53</div>
<div class="cellr" style="left:597.2px;top:543.3px">00:00:06</div>
<div class="cb" style="left:31.7px;top:570.8px"></div>
<div class="cellr" style="left:439.5px;top:568.6px">10:28:53</div>
<div class="cellr" style="left:523.5px;top:568.6px">10:29:00</div>
<div class="cellr" style="left:597.2px;top:568.6px">00:00:07</div>
<div class="cb" style="left:31.7px;top:596.1px"></div>
<div class="cellr" style="left:439.5px;top:593.9px">10:29:00</div>
<div class="cellr" style="left:523.5px;top:593.9px">10:29:06</div>
<div class="cellr" style="left:597.2px;top:593.9px">00:00:06</div>
<div class="cb" style="left:31.7px;top:621.4px"></div>
<div class="cellr" style="left:439.5px;top:619.2px">10:29:06</div>
<div class="cellr" style="left:523.5px;top:619.2px">10:32:30</div>
<div class="cellr" style="left:597.2px;top:619.2px">00:03:24</div>
<div class="cb" style="left:31.7px;top:646.7px"></div>
<div class="cellr" style="left:439.5px;top:644.5px">10:32:30</div>
<div class="cellr" style="left:523.5px;top:644.5px">10:32:35</div>
<div class="cellr" style="left:597.2px;top:644.5px">00:00:05</div>
<div class="cb" style="left:31.7px;top:672.1px"></div>
<div class="cellr" style="left:439.5px;top:669.9px">10:32:35</div>
<div class="cellr" style="left:523.5px;top:669.9px">10:32:59</div>
<div class="cellr" style="left:597.2px;top:669.9px">00:00:24</div>
<div class="cb" style="left:31.7px;top:697.4px"></div>
<svg class="a" style="left:66px;top:694.66px" width="18" height="18" viewBox="0 0 18 18"><ellipse cx="7.2" cy="7.4" rx="6.2" ry="5.3" fill="#2fd46c"/><path d="M3.4 11 L2.6 14 L6 12.4 Z" fill="#2fd46c"/><ellipse cx="12.6" cy="11.6" rx="4.4" ry="3.8" fill="#e9e9e9" stroke="#fff" stroke-width="0.8"/><path d="M14.6 14.4 L16 16.4 L12.6 15.2 Z" fill="#e4e4e4"/><circle cx="11.2" cy="10.8" r="0.6" fill="#b8b8b8"/><circle cx="14" cy="10.8" r="0.6" fill="#b8b8b8"/><circle cx="5" cy="6" r="0.7" fill="#bff3d2"/><circle cx="9" cy="6" r="0.7" fill="#bff3d2"/></svg>
<div class="cell" style="left:102px;top:695.4px;letter-spacing:0.2px">微信</div>
<div class="cellr" style="left:439.5px;top:695.2px">10:32:59</div>
<div class="cellr" style="left:523.5px;top:695.2px">10:33:06</div>
<div class="cellr" style="left:597.2px;top:695.2px">00:00:07</div>
<div class="a" style="left:2px;top:717px;width:692px;height:6px;overflow:hidden">
<div class="cb" style="left:29.7px;top:5px;position:absolute"></div>
<div class="a" style="left:66px;top:3.6px;width:13px;height:10px;border-radius:6px;background:#2fd46c"></div>
<div class="cell" style="left:100px;top:2.6px">开始菜单</div>
</div>
<div class="a" style="left:0;top:0;width:1px;height:1px"><div class="a" style="left:68.3px;top:539.2px;width:15.0px;height:15.0px;background:#ccdaf2"></div><div class="a" style="left:83.0px;top:539.2px;width:15.0px;height:15.0px;background:#ffffff"></div><div class="a" style="left:97.7px;top:539.2px;width:15.0px;height:15.0px;background:#edf0f1"></div><div class="a" style="left:112.5px;top:539.2px;width:15.0px;height:15.0px;background:#dfe4e6"></div><div class="a" style="left:127.2px;top:539.2px;width:15.0px;height:15.0px;background:#e7ebec"></div><div class="a" style="left:68.3px;top:553.9px;width:15.0px;height:15.0px;background:#deedca"></div><div class="a" style="left:83.0px;top:553.9px;width:15.0px;height:15.0px;background:#fbfdfd"></div><div class="a" style="left:97.7px;top:553.9px;width:15.0px;height:15.0px;background:#f9fafa"></div><div class="a" style="left:112.5px;top:553.9px;width:15.0px;height:15.0px;background:#fbfcfc"></div><div class="a" style="left:127.2px;top:553.9px;width:15.0px;height:15.0px;background:#f2f4f5"></div><div class="a" style="left:141.9px;top:553.9px;width:15.0px;height:15.0px;background:#f8f9f9"></div><div class="a" style="left:156.6px;top:553.9px;width:15.0px;height:15.0px;background:#f2f4f5"></div><div class="a" style="left:171.3px;top:553.9px;width:15.0px;height:15.0px;background:#f3f5f5"></div><div class="a" style="left:186.1px;top:553.9px;width:15.0px;height:15.0px;background:#f9fafa"></div><div class="a" style="left:200.8px;top:553.9px;width:15.0px;height:15.0px;background:#f8f9fa"></div><div class="a" style="left:215.5px;top:553.9px;width:15.0px;height:15.0px;background:#f5f7f7"></div><div class="a" style="left:230.2px;top:553.9px;width:15.0px;height:15.0px;background:#f7f8f9"></div><div class="a" style="left:244.9px;top:553.9px;width:15.0px;height:15.0px;background:#f6f8f8"></div><div class="a" style="left:259.7px;top:553.9px;width:15.0px;height:15.0px;background:#f8f9f9"></div><div class="a" style="left:274.4px;top:553.9px;width:15.0px;height:15.0px;background:#eff2f3"></div><div class="a" style="left:289.1px;top:553.9px;width:15.0px;height:15.0px;background:#f4f6f7"></div><div class="a" style="left:303.8px;top:553.9px;width:15.0px;height:15.0px;background:#f8f9f9"></div><div class="a" style="left:318.5px;top:553.9px;width:15.0px;height:15.0px;background:#f4f6f7"></div><div class="a" style="left:333.3px;top:553.9px;width:15.0px;height:15.0px;background:#f3f5f6"></div><div class="a" style="left:362.7px;top:553.9px;width:15.0px;height:15.0px;background:#f5f7f7"></div><div class="a" style="left:377.4px;top:553.9px;width:15.0px;height:15.0px;background:#f5f7f7"></div><div class="a" style="left:392.1px;top:553.9px;width:15.0px;height:15.0px;background:#eff2f2"></div><div class="a" style="left:406.9px;top:553.9px;width:15.0px;height:15.0px;background:#f2f4f5"></div><div class="a" style="left:421.6px;top:553.9px;width:15.0px;height:15.0px;background:#f6f7f8"></div><div class="a" style="left:68.3px;top:568.5px;width:15.0px;height:15.0px;background:#b9c1b5"></div><div class="a" style="left:83.0px;top:568.5px;width:15.0px;height:15.0px;background:#e1f4f8"></div><div class="a" style="left:97.7px;top:568.5px;width:15.0px;height:15.0px;background:#e7ebec"></div><div class="a" style="left:112.5px;top:568.5px;width:15.0px;height:15.0px;background:#e7ebed"></div><div class="a" style="left:127.2px;top:568.5px;width:15.0px;height:15.0px;background:#ccd4d7"></div><div class="a" style="left:141.9px;top:568.5px;width:15.0px;height:15.0px;background:#dde3e5"></div><div class="a" style="left:156.6px;top:568.5px;width:15.0px;height:15.0px;background:#c2cccf"></div><div class="a" style="left:171.3px;top:568.5px;width:15.0px;height:15.0px;background:#cbd4d6"></div><div class="a" style="left:186.1px;top:568.5px;width:15.0px;height:15.0px;background:#e2e7e8"></div><div class="a" style="left:200.8px;top:568.5px;width:15.0px;height:15.0px;background:#e1e6e8"></div><div class="a" style="left:215.5px;top:568.5px;width:15.0px;height:15.0px;background:#cfd7da"></div><div class="a" style="left:230.2px;top:568.5px;width:15.0px;height:15.0px;background:#dbe1e3"></div><div class="a" style="left:244.9px;top:568.5px;width:15.0px;height:15.0px;background:#d9dfe1"></div><div class="a" style="left:259.7px;top:568.5px;width:15.0px;height:15.0px;background:#dfe5e6"></div><div class="a" style="left:274.4px;top:568.5px;width:15.0px;height:15.0px;background:#bec8cc"></div><div class="a" style="left:289.1px;top:568.5px;width:15.0px;height:15.0px;background:#d2dadc"></div><div class="a" style="left:303.8px;top:568.5px;width:15.0px;height:15.0px;background:#dce2e4"></div><div class="a" style="left:318.5px;top:568.5px;width:15.0px;height:15.0px;background:#d0d8da"></div><div class="a" style="left:333.3px;top:568.5px;width:15.0px;height:15.0px;background:#ccd5d7"></div><div class="a" style="left:362.7px;top:568.5px;width:15.0px;height:15.0px;background:#d7dddf"></div><div class="a" style="left:377.4px;top:568.5px;width:15.0px;height:15.0px;background:#d1d9db"></div><div class="a" style="left:392.1px;top:568.5px;width:15.0px;height:15.0px;background:#bcc7cb"></div><div class="a" style="left:406.9px;top:568.5px;width:15.0px;height:15.0px;background:#c3cdd1"></div><div class="a" style="left:421.6px;top:568.5px;width:15.0px;height:15.0px;background:#dbe1e3"></div><div class="a" style="left:68.3px;top:583.2px;width:15.0px;height:15.0px;background:#d2e9c2"></div><div class="a" style="left:83.0px;top:583.2px;width:15.0px;height:15.0px;background:#e4f6fa"></div><div class="a" style="left:97.7px;top:583.2px;width:15.0px;height:15.0px;background:#f2f4f5"></div><div class="a" style="left:112.5px;top:583.2px;width:15.0px;height:15.0px;background:#f5f6f7"></div><div class="a" style="left:127.2px;top:583.2px;width:15.0px;height:15.0px;background:#e1e6e7"></div><div class="a" style="left:141.9px;top:583.2px;width:15.0px;height:15.0px;background:#eef1f2"></div><div class="a" style="left:156.6px;top:583.2px;width:15.0px;height:15.0px;background:#dfe4e6"></div><div class="a" style="left:171.3px;top:583.2px;width:15.0px;height:15.0px;background:#e5e9eb"></div><div class="a" style="left:186.1px;top:583.2px;width:15.0px;height:15.0px;background:#f1f3f4"></div><div class="a" style="left:200.8px;top:583.2px;width:15.0px;height:15.0px;background:#f0f2f3"></div><div class="a" style="left:215.5px;top:583.2px;width:15.0px;height:15.0px;background:#e8eced"></div><div class="a" style="left:230.2px;top:583.2px;width:15.0px;height:15.0px;background:#edf0f1"></div><div class="a" style="left:244.9px;top:583.2px;width:15.0px;height:15.0px;background:#eceff0"></div><div class="a" style="left:259.7px;top:583.2px;width:15.0px;height:15.0px;background:#eceff0"></div><div class="a" style="left:274.4px;top:583.2px;width:15.0px;height:15.0px;background:#d9dfe1"></div><div class="a" style="left:289.1px;top:583.2px;width:15.0px;height:15.0px;background:#e9edee"></div><div class="a" style="left:303.8px;top:583.2px;width:15.0px;height:15.0px;background:#ebeef0"></div><div class="a" style="left:318.5px;top:583.2px;width:15.0px;height:15.0px;background:#e7ebec"></div><div class="a" style="left:333.3px;top:583.2px;width:15.0px;height:15.0px;background:#e5e9ea"></div><div class="a" style="left:362.7px;top:583.2px;width:15.0px;height:15.0px;background:#e9edee"></div><div class="a" style="left:377.4px;top:583.2px;width:15.0px;height:15.0px;background:#eaedee"></div><div class="a" style="left:392.1px;top:583.2px;width:15.0px;height:15.0px;background:#dce2e4"></div><div class="a" style="left:406.9px;top:583.2px;width:15.0px;height:15.0px;background:#dbe1e3"></div><div class="a" style="left:421.6px;top:583.2px;width:15.0px;height:15.0px;background:#edf0f1"></div><div class="a" style="left:68.3px;top:597.8px;width:15.0px;height:15.0px;background:#cacaca"></div><div class="a" style="left:83.0px;top:597.8px;width:15.0px;height:15.0px;background:#ebf9fc"></div><div class="a" style="left:97.7px;top:597.8px;width:15.0px;height:15.0px;background:#f7f9f9"></div><div class="a" style="left:112.5px;top:597.8px;width:15.0px;height:15.0px;background:#fafbfb"></div><div class="a" style="left:127.2px;top:597.8px;width:15.0px;height:15.0px;background:#eef1f2"></div><div class="a" style="left:141.9px;top:597.8px;width:15.0px;height:15.0px;background:#f4f6f7"></div><div class="a" style="left:156.6px;top:597.8px;width:15.0px;height:15.0px;background:#edf0f1"></div><div class="a" style="left:171.3px;top:597.8px;width:15.0px;height:15.0px;background:#edf0f1"></div><div class="a" style="left:186.1px;top:597.8px;width:15.0px;height:15.0px;background:#f7f8f9"></div><div class="a" style="left:200.8px;top:597.8px;width:15.0px;height:15.0px;background:#f7f8f9"></div><div class="a" style="left:215.5px;top:597.8px;width:15.0px;height:15.0px;background:#f0f3f3"></div><div class="a" style="left:230.2px;top:597.8px;width:15.0px;height:15.0px;background:#f6f7f8"></div><div class="a" style="left:244.9px;top:597.8px;width:15.0px;height:15.0px;background:#f3f5f5"></div><div class="a" style="left:259.7px;top:597.8px;width:15.0px;height:15.0px;background:#f6f7f8"></div><div class="a" style="left:274.4px;top:597.8px;width:15.0px;height:15.0px;background:#edf0f1"></div><div class="a" style="left:289.1px;top:597.8px;width:15.0px;height:15.0px;background:#f4f6f6"></div><div class="a" style="left:303.8px;top:597.8px;width:15.0px;height:15.0px;background:#f4f6f6"></div><div class="a" style="left:318.5px;top:597.8px;width:15.0px;height:15.0px;background:#f2f4f5"></div><div class="a" style="left:333.3px;top:597.8px;width:15.0px;height:15.0px;background:#f2f4f4"></div><div class="a" style="left:362.7px;top:597.8px;width:15.0px;height:15.0px;background:#f2f4f4"></div><div class="a" style="left:377.4px;top:597.8px;width:15.0px;height:15.0px;background:#f4f6f6"></div><div class="a" style="left:392.1px;top:597.8px;width:15.0px;height:15.0px;background:#edf0f1"></div><div class="a" style="left:406.9px;top:597.8px;width:15.0px;height:15.0px;background:#edf0f1"></div><div class="a" style="left:421.6px;top:597.8px;width:15.0px;height:15.0px;background:#f4f6f6"></div><div class="a" style="left:68.3px;top:612.5px;width:15.0px;height:15.0px;background:#b2d9a3"></div><div class="a" style="left:83.0px;top:612.5px;width:15.0px;height:15.0px;background:#d9f0f4"></div><div class="a" style="left:97.7px;top:612.5px;width:15.0px;height:15.0px;background:#e4e8ea"></div><div class="a" style="left:112.5px;top:612.5px;width:15.0px;height:15.0px;background:#e7ebed"></div><div class="a" style="left:127.2px;top:612.5px;width:15.0px;height:15.0px;background:#cad2d5"></div><div class="a" style="left:141.9px;top:612.5px;width:15.0px;height:15.0px;background:#dce2e4"></div><div class="a" style="left:156.6px;top:612.5px;width:15.0px;height:15.0px;background:#c8d1d4"></div><div class="a" style="left:171.3px;top:612.5px;width:15.0px;height:15.0px;background:#c1cbcf"></div><div class="a" style="left:186.1px;top:612.5px;width:15.0px;height:15.0px;background:#dfe4e6"></div><div class="a" style="left:200.8px;top:612.5px;width:15.0px;height:15.0px;background:#e5e9eb"></div><div class="a" style="left:215.5px;top:612.5px;width:15.0px;height:15.0px;background:#d1d9db"></div><div class="a" style="left:230.2px;top:612.5px;width:15.0px;height:15.0px;background:#dee3e5"></div><div class="a" style="left:244.9px;top:612.5px;width:15.0px;height:15.0px;background:#d7dee0"></div><div class="a" style="left:259.7px;top:612.5px;width:15.0px;height:15.0px;background:#dce1e3"></div><div class="a" style="left:274.4px;top:612.5px;width:15.0px;height:15.0px;background:#b7c3c7"></div><div class="a" style="left:289.1px;top:612.5px;width:15.0px;height:15.0px;background:#d7dee0"></div><div class="a" style="left:303.8px;top:612.5px;width:15.0px;height:15.0px;background:#e0e5e7"></div><div class="a" style="left:318.5px;top:612.5px;width:15.0px;height:15.0px;background:#ced6d9"></div><div class="a" style="left:333.3px;top:612.5px;width:15.0px;height:15.0px;background:#cfd7da"></div><div class="a" style="left:362.7px;top:612.5px;width:15.0px;height:15.0px;background:#cfd7da"></div><div class="a" style="left:377.4px;top:612.5px;width:15.0px;height:15.0px;background:#d2dadc"></div><div class="a" style="left:392.1px;top:612.5px;width:15.0px;height:15.0px;background:#bfcacd"></div><div class="a" style="left:406.9px;top:612.5px;width:15.0px;height:15.0px;background:#bdc8cc"></div><div class="a" style="left:421.6px;top:612.5px;width:15.0px;height:15.0px;background:#dae0e2"></div><div class="a" style="left:68.3px;top:627.2px;width:15.0px;height:15.0px;background:#f1e2ea"></div><div class="a" style="left:83.0px;top:627.2px;width:15.0px;height:15.0px;background:#fdfdfe"></div><div class="a" style="left:97.7px;top:627.2px;width:15.0px;height:15.0px;background:#fdfdfd"></div><div class="a" style="left:112.5px;top:627.2px;width:15.0px;height:15.0px;background:#fdfefe"></div><div class="a" style="left:127.2px;top:627.2px;width:15.0px;height:15.0px;background:#fbfbfc"></div><div class="a" style="left:141.9px;top:627.2px;width:15.0px;height:15.0px;background:#fcfdfd"></div><div class="a" style="left:156.6px;top:627.2px;width:15.0px;height:15.0px;background:#fbfbfc"></div><div class="a" style="left:171.3px;top:627.2px;width:15.0px;height:15.0px;background:#fbfcfc"></div><div class="a" style="left:186.1px;top:627.2px;width:15.0px;height:15.0px;background:#fdfdfd"></div><div class="a" style="left:200.8px;top:627.2px;width:15.0px;height:15.0px;background:#fdfdfd"></div><div class="a" style="left:215.5px;top:627.2px;width:15.0px;height:15.0px;background:#fbfcfc"></div><div class="a" style="left:230.2px;top:627.2px;width:15.0px;height:15.0px;background:#fdfdfd"></div><div class="a" style="left:244.9px;top:627.2px;width:15.0px;height:15.0px;background:#fcfdfd"></div><div class="a" style="left:259.7px;top:627.2px;width:15.0px;height:15.0px;background:#fdfdfd"></div><div class="a" style="left:274.4px;top:627.2px;width:15.0px;height:15.0px;background:#fbfbfc"></div><div class="a" style="left:289.1px;top:627.2px;width:15.0px;height:15.0px;background:#fcfcfd"></div><div class="a" style="left:303.8px;top:627.2px;width:15.0px;height:15.0px;background:#fdfdfd"></div><div class="a" style="left:318.5px;top:627.2px;width:15.0px;height:15.0px;background:#fcfcfd"></div><div class="a" style="left:333.3px;top:627.2px;width:15.0px;height:15.0px;background:#fcfcfc"></div><div class="a" style="left:362.7px;top:627.2px;width:15.0px;height:15.0px;background:#fcfcfd"></div><div class="a" style="left:377.4px;top:627.2px;width:15.0px;height:15.0px;background:#fcfdfd"></div><div class="a" style="left:392.1px;top:627.2px;width:15.0px;height:15.0px;background:#fafbfb"></div><div class="a" style="left:406.9px;top:627.2px;width:15.0px;height:15.0px;background:#fbfbfb"></div><div class="a" style="left:421.6px;top:627.2px;width:15.0px;height:15.0px;background:#fdfdfd"></div><div class="a" style="left:68.3px;top:641.8px;width:15.0px;height:15.0px;background:#cad9f8"></div><div class="a" style="left:83.0px;top:641.8px;width:15.0px;height:15.0px;background:#ffffff"></div><div class="a" style="left:97.7px;top:641.8px;width:15.0px;height:15.0px;background:#edf0f1"></div><div class="a" style="left:112.5px;top:641.8px;width:15.0px;height:15.0px;background:#dfe4e6"></div><div class="a" style="left:127.2px;top:641.8px;width:15.0px;height:15.0px;background:#e7ebec"></div><div class="a" style="left:68.3px;top:656.5px;width:15.0px;height:15.0px;background:#deedca"></div><div class="a" style="left:83.0px;top:656.5px;width:15.0px;height:15.0px;background:#f6fbfc"></div><div class="a" style="left:97.7px;top:656.5px;width:15.0px;height:15.0px;background:#f8f9f9"></div><div class="a" style="left:112.5px;top:656.5px;width:15.0px;height:15.0px;background:#f9fafb"></div><div class="a" style="left:127.2px;top:656.5px;width:15.0px;height:15.0px;background:#eef1f2"></div><div class="a" style="left:141.9px;top:656.5px;width:15.0px;height:15.0px;background:#f5f7f7"></div><div class="a" style="left:156.6px;top:656.5px;width:15.0px;height:15.0px;background:#eceff0"></div><div class="a" style="left:171.3px;top:656.5px;width:15.0px;height:15.0px;background:#eceff0"></div><div class="a" style="left:186.1px;top:656.5px;width:15.0px;height:15.0px;background:#f6f8f8"></div><div class="a" style="left:200.8px;top:656.5px;width:15.0px;height:15.0px;background:#f6f8f8"></div><div class="a" style="left:215.5px;top:656.5px;width:15.0px;height:15.0px;background:#f1f4f4"></div><div class="a" style="left:230.2px;top:656.5px;width:15.0px;height:15.0px;background:#f5f7f7"></div><div class="a" style="left:244.9px;top:656.5px;width:15.0px;height:15.0px;background:#f2f4f5"></div><div class="a" style="left:259.7px;top:656.5px;width:15.0px;height:15.0px;background:#f5f6f7"></div><div class="a" style="left:274.4px;top:656.5px;width:15.0px;height:15.0px;background:#e8ebed"></div><div class="a" style="left:289.1px;top:656.5px;width:15.0px;height:15.0px;background:#f3f5f6"></div><div class="a" style="left:303.8px;top:656.5px;width:15.0px;height:15.0px;background:#f5f7f7"></div><div class="a" style="left:318.5px;top:656.5px;width:15.0px;height:15.0px;background:#eef1f2"></div><div class="a" style="left:333.3px;top:656.5px;width:15.0px;height:15.0px;background:#f0f2f3"></div><div class="a" style="left:362.7px;top:656.5px;width:15.0px;height:15.0px;background:#f2f4f5"></div><div class="a" style="left:377.4px;top:656.5px;width:15.0px;height:15.0px;background:#f3f5f6"></div><div class="a" style="left:392.1px;top:656.5px;width:15.0px;height:15.0px;background:#ebeff0"></div><div class="a" style="left:406.9px;top:656.5px;width:15.0px;height:15.0px;background:#e9edee"></div><div class="a" style="left:421.6px;top:656.5px;width:15.0px;height:15.0px;background:#f3f5f6"></div><div class="a" style="left:68.3px;top:671.1px;width:15.0px;height:15.0px;background:#bac5ba"></div><div class="a" style="left:83.0px;top:671.1px;width:15.0px;height:15.0px;background:#e2f0f7"></div><div class="a" style="left:97.7px;top:671.1px;width:15.0px;height:15.0px;background:#eceff0"></div><div class="a" style="left:112.5px;top:671.1px;width:15.0px;height:15.0px;background:#f3f5f6"></div><div class="a" style="left:127.2px;top:671.1px;width:15.0px;height:15.0px;background:#d9dfe1"></div><div class="a" style="left:141.9px;top:671.1px;width:15.0px;height:15.0px;background:#e8eced"></div><div class="a" style="left:156.6px;top:671.1px;width:15.0px;height:15.0px;background:#d4dbde"></div><div class="a" style="left:171.3px;top:671.1px;width:15.0px;height:15.0px;background:#d7dde0"></div><div class="a" style="left:186.1px;top:671.1px;width:15.0px;height:15.0px;background:#e9edee"></div><div class="a" style="left:200.8px;top:671.1px;width:15.0px;height:15.0px;background:#eceff0"></div><div class="a" style="left:215.5px;top:671.1px;width:15.0px;height:15.0px;background:#dfe4e6"></div><div class="a" style="left:230.2px;top:671.1px;width:15.0px;height:15.0px;background:#e4e8ea"></div><div class="a" style="left:244.9px;top:671.1px;width:15.0px;height:15.0px;background:#dde3e5"></div><div class="a" style="left:259.7px;top:671.1px;width:15.0px;height:15.0px;background:#e4e8ea"></div><div class="a" style="left:274.4px;top:671.1px;width:15.0px;height:15.0px;background:#cad2d5"></div><div class="a" style="left:289.1px;top:671.1px;width:15.0px;height:15.0px;background:#dfe4e6"></div><div class="a" style="left:303.8px;top:671.1px;width:15.0px;height:15.0px;background:#e4e9ea"></div><div class="a" style="left:318.5px;top:671.1px;width:15.0px;height:15.0px;background:#dfe4e6"></div><div class="a" style="left:333.3px;top:671.1px;width:15.0px;height:15.0px;background:#dce2e4"></div><div class="a" style="left:362.7px;top:671.1px;width:15.0px;height:15.0px;background:#e5e9ea"></div><div class="a" style="left:377.4px;top:671.1px;width:15.0px;height:15.0px;background:#e5e9ea"></div><div class="a" style="left:392.1px;top:671.1px;width:15.0px;height:15.0px;background:#d5dcde"></div><div class="a" style="left:406.9px;top:671.1px;width:15.0px;height:15.0px;background:#d5dcde"></div><div class="a" style="left:421.6px;top:671.1px;width:15.0px;height:15.0px;background:#e5e9ea"></div></div>
<div class="a" style="left:67px;top:685px;width:16px;height:1.3px;background:#d9534f"></div>
<div class="a" style="left:723.3px;top:391px;width:355px;height:332px;background:#fff"></div>
<div class="a" style="left:723px;top:697.4px;width:338px;height:1px;background:#e6e6e6"></div>
<div class="a" style="left:1061px;top:391px;width:17px;height:306.5px;background:#f0f0f0"></div>
<div class="a" style="left:1061px;top:409px;width:17px;height:108.5px;background:#cdcdcd"></div>
<svg class="a" style="left:1064.5px;top:396px" width="10" height="7" viewBox="0 0 10 7" fill="none" stroke="#8a8a8a" stroke-width="1.2"><path d="M1 5.6 L5 1.6 L9 5.6"/></svg>
<svg class="a" style="left:1064.5px;top:684px" width="10" height="7" viewBox="0 0 10 7" fill="none" stroke="#8a8a8a" stroke-width="1.2"><path d="M1 1.4 L5 5.4 L9 1.4"/></svg>
<div class="cb" style="left:747.8px;top:397.5px;width:14.6px;height:14.2px"></div>
<svg class="a" style="left:766px;top:394.9px" width="18" height="18" viewBox="0 0 18 18"><ellipse cx="7.2" cy="7.4" rx="6.2" ry="5.3" fill="#2fd46c"/><path d="M3.4 11 L2.6 14 L6 12.4 Z" fill="#2fd46c"/><ellipse cx="12.6" cy="11.6" rx="4.4" ry="3.8" fill="#e9e9e9" stroke="#fff" stroke-width="0.8"/><path d="M14.6 14.4 L16 16.4 L12.6 15.2 Z" fill="#e4e4e4"/><circle cx="11.2" cy="10.8" r="0.6" fill="#b8b8b8"/><circle cx="14" cy="10.8" r="0.6" fill="#b8b8b8"/><circle cx="5" cy="6" r="0.7" fill="#bff3d2"/><circle cx="9" cy="6" r="0.7" fill="#bff3d2"/></svg>
<div class="cell" style="left:789px;top:395.3px;width:91px;overflow:hidden;letter-spacing:0.27px">WeChat</div>
<div class="pbar" style="top:396.7px;height:14.2px"><div class="pfill" style="width:30.9px;background:#3edc7d"></div><div class="ptxt" style="left:33.1px">36.6%</div></div>
<div class="cellr" style="left:966px;top:395.0px">1:02:44</div>
<div class="cb" style="left:747.8px;top:422.8px;width:14.6px;height:14.2px"></div>
<svg class="a" style="left:766px;top:420.21px" width="18" height="18" viewBox="0 0 18 18"><circle cx="9" cy="9" r="8.2" fill="#e33b2e"/><path d="M9 9 L1.9 4.9 A8.2 8.2 0 0 0 9.0 17.2 L12.6 11 Z" fill="#2da94f"/><path d="M9 9 L12.6 11 L9 17.2 A8.2 8.2 0 0 0 16.1 4.9 L9 4.9 Z" fill="#fdd03b"/><path d="M1.9 4.9 A8.2 8.2 0 0 1 16.1 4.9 L9 4.9 Z" fill="#e33b2e"/><circle cx="9" cy="9" r="4" fill="#fff"/><circle cx="9" cy="9" r="3.1" fill="#3b7de9"/></svg>
<div class="cell" style="left:789px;top:420.6px;width:91px;overflow:hidden;letter-spacing:0.27px">Google Chrome</div>
<div class="pbar" style="top:422.0px;height:14.2px"><div class="pfill" style="width:18.3px;background:#efb00c"></div><div class="ptxt" style="left:20.5px">21.6%</div></div>
<div class="cellr" style="left:966px;top:420.3px">0:36:57</div>
<div class="cb" style="left:747.8px;top:448.1px;width:14.6px;height:14.2px"></div>
<svg class="a" style="left:766px;top:445.52px" width="18" height="18" viewBox="0 0 18 18"><defs><linearGradient id="eg1" x1="0" y1="0" x2="0.3" y2="1"><stop offset="0" stop-color="#2b8fdc"/><stop offset="1" stop-color="#0b52a0"/></linearGradient><linearGradient id="eg2" x1="0" y1="0" x2="1" y2="0.6"><stop offset="0" stop-color="#2bb7c9"/><stop offset="1" stop-color="#5fd45c"/></linearGradient></defs><circle cx="9" cy="9" r="8.3" fill="url(#eg1)"/><path d="M6.4 1.2 C9.6 0 14 1 16.2 4.6 C17.8 7.4 17.6 10.4 16.2 12.4 C15.6 13 14.6 13.2 13.6 13 C15 11.4 15 8.6 13.4 6.6 C11.6 4.4 8.6 4 6 5.2 C4.6 5.8 3.4 7 2.8 8.2 C2.6 5 4 2.4 6.4 1.2 Z" fill="url(#eg2)"/><path d="M10 6.2 C7.6 7 7 10.4 9 12.2 C11.2 14 14.8 13.4 16.6 11.2 C14.8 12 12.6 11.6 11.6 10.4 C10.6 9.2 10.8 7.6 12 6.6 C11.4 6.2 10.6 6 10 6.2 Z" fill="#fff"/></svg>
<div class="cell" style="left:789px;top:445.9px;width:91px;overflow:hidden;letter-spacing:0.27px">Microsoft Edge</div>
<div class="pbar" style="top:447.3px;height:14.2px"><div class="pfill" style="width:11.2px;background:#12386b"></div><div class="ptxt" style="left:13.4px">13.3%</div></div>
<div class="cellr" style="left:966px;top:445.6px">0:22:51</div>
<div class="cb" style="left:747.8px;top:473.4px;width:14.6px;height:14.2px"></div>
<svg class="a" style="left:766px;top:470.83px" width="18" height="18" viewBox="0 0 18 18"><defs><linearGradient id="fg1" x1="0" y1="0" x2="1" y2="0"><stop offset="0" stop-color="#f4d52e"/><stop offset="0.45" stop-color="#f0d838"/><stop offset="0.6" stop-color="#35c8d4"/><stop offset="1" stop-color="#2fc2d8"/></linearGradient><linearGradient id="fg2" x1="0" y1="0" x2="1" y2="0"><stop offset="0" stop-color="#e6503a"/><stop offset="0.5" stop-color="#ee7a3c"/><stop offset="1" stop-color="#35c4d4"/></linearGradient></defs><rect x="1" y="1" width="16" height="16" rx="2" fill="url(#fg1)"/><path d="M1 10 L17 13 L17 15 Q17 17 15 17 L3 17 Q1 17 1 15 Z" fill="url(#fg2)"/><path d="M1 8 L3.4 8 L3.4 15 L1 15 Z" fill="#e8653a"/><path d="M3.6 4.2 L6.4 4.2 L9 2.4 L11.6 4.2 L14.6 4.2 L14.6 15.2 L3.6 15.2 Z" fill="#fdfdf6"/><g fill="#2f7fe0"><rect x="5.2" y="5.6" width="7.8" height="1.2"/><rect x="5.2" y="7.8" width="7.8" height="1.2"/><rect x="5.2" y="10" width="7.8" height="1.2"/><rect x="5.2" y="12.2" width="7.8" height="1.2"/><path d="M7.6 5 L9 3.4 L10.4 5 Z"/></g></svg>
<div class="cell" style="left:789px;top:471.2px;width:91px;overflow:hidden;letter-spacing:0.27px">2345看图王</div>
<div class="pbar" style="top:472.6px;height:14.2px"><div class="pfill" style="width:5.2px;background:#a08a10"></div><div class="ptxt" style="left:7.4px">6.2%</div></div>
<div class="cellr" style="left:966px;top:470.9px">0:10:33</div>
<div class="cb" style="left:747.8px;top:498.7px;width:14.6px;height:14.2px"></div>
<svg class="a" style="left:766px;top:496.14px" width="18" height="18" viewBox="0 0 18 18"><path d="M1 3 Q1 2 2 2 L7 2 L8.6 4 L16 4 Q17 4 17 5 L17 15 Q17 16 16 16 L2 16 Q1 16 1 15 Z" fill="#e9a91c"/><path d="M1 6.4 L17 6.4 L17 15 Q17 16 16 16 L2 16 Q1 16 1 15 Z" fill="#fbd45e"/><rect x="4.4" y="10.8" width="9.2" height="5.2" fill="#1565c0"/><rect x="4.4" y="10.8" width="9.2" height="1.4" fill="#2f8fe0"/></svg>
<div class="cell" style="left:789px;top:496.5px;width:91px;overflow:hidden;letter-spacing:0.27px">Windows 资源管理器</div>
<div class="pbar" style="top:497.9px;height:14.2px"><div class="pfill" style="width:3.4px;background:#c99a18"></div><div class="ptxt" style="left:5.6px">4.0%</div></div>
<div class="cellr" style="left:966px;top:496.2px">0:06:52</div>
<div class="cb" style="left:747.8px;top:524.1px;width:14.6px;height:14.2px"></div>
<svg class="a" style="left:766px;top:521.45px" width="18" height="18" viewBox="0 0 18 18"><ellipse cx="7.2" cy="7.4" rx="6.2" ry="5.3" fill="#2fd46c"/><path d="M3.4 11 L2.6 14 L6 12.4 Z" fill="#2fd46c"/><ellipse cx="12.6" cy="11.6" rx="4.4" ry="3.8" fill="#e9e9e9" stroke="#fff" stroke-width="0.8"/><path d="M14.6 14.4 L16 16.4 L12.6 15.2 Z" fill="#e4e4e4"/><circle cx="11.2" cy="10.8" r="0.6" fill="#b8b8b8"/><circle cx="14" cy="10.8" r="0.6" fill="#b8b8b8"/><circle cx="5" cy="6" r="0.7" fill="#bff3d2"/><circle cx="9" cy="6" r="0.7" fill="#bff3d2"/></svg>
<div class="cell" style="left:789px;top:521.9px;width:91px;overflow:hidden;letter-spacing:0.27px">Weixin</div>
<div class="pbar" style="top:523.2px;height:14.2px"><div class="pfill" style="width:3.0px;background:#3edc7d"></div><div class="ptxt" style="left:5.2px">3.6%</div></div>
<div class="cellr" style="left:966px;top:521.6px">0:06:09</div>
<div class="cb" style="left:747.8px;top:549.4px;width:14.6px;height:14.2px"></div>
<svg class="a" style="left:766px;top:546.76px" width="18" height="18" viewBox="0 0 18 18"><path d="M3.4 1.4 L14.6 1.4 Q16.6 1.4 16.6 3.4 L16.6 11.6 Q16.6 13.6 14.6 13.6 L11.4 13.6 L10.2 16.6 L8.6 13.6 L3.4 13.6 Q1.4 13.6 1.4 11.6 L1.4 3.4 Q1.4 1.4 3.4 1.4 Z" fill="#1e7fe6"/><path d="M9 3 L9 12 M5.1 5.2 L12.9 9.8 M12.9 5.2 L5.1 9.8" stroke="#fff" stroke-width="2.3" stroke-linecap="round"/></svg>
<div class="cell" style="left:789px;top:547.2px;width:91px;overflow:hidden;letter-spacing:0.27px">TIM</div>
<div class="pbar" style="top:548.6px;height:14.2px"><div class="pfill" style="width:3.0px;background:#1a5fa0"></div><div class="ptxt" style="left:5.2px">3.5%</div></div>
<div class="cellr" style="left:966px;top:546.9px">0:06:00</div>
<div class="cb" style="left:747.8px;top:574.7px;width:14.6px;height:14.2px"></div>
<svg class="a" style="left:766px;top:572.07px" width="18" height="18" viewBox="0 0 18 18"><rect x="1.8" y="2.8" width="13.4" height="10" rx="1.2" fill="#fff" stroke="#3ccf86" stroke-width="1.7"/><ellipse cx="13.6" cy="12.8" rx="3.8" ry="3.4" fill="#d8d8d8" stroke="#fff" stroke-width="1"/><circle cx="12.4" cy="12.4" r="0.5" fill="#999"/><circle cx="14.8" cy="12.4" r="0.5" fill="#999"/></svg>
<div class="cell" style="left:789px;top:572.5px;width:91px;overflow:hidden;letter-spacing:0.27px">WeChatAppEx</div>
<div class="pbar" style="top:573.9px;height:14.2px"><div class="pfill" style="width:2.6px;background:#18b04a"></div><div class="ptxt" style="left:4.8px">2.5%</div></div>
<div class="cellr" style="left:966px;top:572.2px">0:04:17</div>
<div class="cb" style="left:747.8px;top:600.0px;width:14.6px;height:14.2px"></div>
<svg class="a" style="left:766px;top:597.38px" width="18" height="18" viewBox="0 0 18 18"><ellipse cx="9" cy="16" rx="4.6" ry="1.4" fill="#f5b415"/><path d="M9 1.2 C6 1.2 4.8 3.6 4.8 6 C4.8 8 3 9.8 2.6 12.6 C2.4 14 3.4 14 4.2 12.8 C4.6 14.6 6.4 16 9 16 C11.6 16 13.4 14.6 13.8 12.8 C14.6 14 15.6 14 15.4 12.6 C15 9.8 13.2 8 13.2 6 C13.2 3.6 12 1.2 9 1.2 Z" fill="#141414"/><ellipse cx="9" cy="12.2" rx="3.5" ry="3.3" fill="#fff"/><path d="M4.6 8.2 C7 9.6 11 9.6 13.4 8.2 L13.6 10 C11 11.2 7 11.2 4.4 10 Z" fill="#e2231a"/><ellipse cx="7.6" cy="4.6" rx="0.9" ry="1.3" fill="#fff"/><ellipse cx="10.4" cy="4.6" rx="0.9" ry="1.3" fill="#fff"/><ellipse cx="9" cy="6.9" rx="2.2" ry="0.8" fill="#f5a915"/></svg>
<div class="cell" style="left:789px;top:597.8px;width:91px;overflow:hidden;letter-spacing:0.27px">QQ</div>
<div class="pbar" style="top:599.2px;height:14.2px"><div class="pfill" style="width:2.6px;background:#e63946"></div><div class="ptxt" style="left:4.8px">2.4%</div></div>
<div class="cellr" style="left:966px;top:597.5px">0:04:05</div>
<div class="cb" style="left:747.8px;top:625.3px;width:14.6px;height:14.2px"></div>
<svg class="a" style="left:766px;top:622.69px" width="18" height="18" viewBox="0 0 18 18"><rect x="0.8" y="0.8" width="16.4" height="16.4" rx="2.6" fill="#0a2a4e"/><text x="9" y="12.8" font-family="Liberation Sans, sans-serif" font-size="9.5" font-weight="700" fill="#4db8ff" text-anchor="middle">Ps</text></svg>
<div class="cell" style="left:789px;top:623.1px;width:91px;overflow:hidden;letter-spacing:0.27px">Adobe Photoshop</div>
<div class="pbar" style="top:624.5px;height:14.2px"><div class="pfill" style="width:2.6px;background:#111111"></div><div class="ptxt" style="left:4.8px">1.9%</div></div>
<div class="cellr" style="left:966px;top:622.8px">0:03:18</div>
<div class="cb" style="left:747.8px;top:650.6px;width:14.6px;height:14.2px"></div>
<svg class="a" style="left:766px;top:648px" width="18" height="18" viewBox="0 0 18 18"><rect x="1.4" y="3" width="13.6" height="10" rx="1.2" fill="#1e86dc"/><path d="M5.4 13 L8.6 13 L7 16.2 Z" fill="#1e86dc"/><rect x="3" y="4.6" width="10.4" height="2" fill="#6bc0f5"/><ellipse cx="13" cy="11.6" rx="4" ry="3.4" fill="#49b6f2" stroke="#fff" stroke-width="1"/><circle cx="13" cy="11.6" r="1.3" fill="#eaf6fe"/></svg>
<div class="cell" style="left:789px;top:648.4px;width:91px;overflow:hidden;letter-spacing:0.27px">PowerToys</div>
<div class="pbar" style="top:649.8px;height:14.2px"><div class="pfill" style="width:2.6px;background:#2272a2"></div><div class="ptxt" style="left:4.8px">0.6%</div></div>
<div class="cellr" style="left:966px;top:648.1px">0:01:01</div>
<div class="cb" style="left:747.8px;top:675.9px;width:14.6px;height:14.2px"></div>
<svg class="a" style="left:766px;top:673.31px" width="18" height="18" viewBox="0 0 18 18"><rect x="0.8" y="0.8" width="16.4" height="16.4" rx="2.6" fill="#ecd22c"/><circle cx="9" cy="9" r="5.6" fill="#fffbe4"/><path d="M7.4 5.8 L12.4 9 L7.4 12.2 Z" fill="#e8c81e"/></svg>
<div class="cell" style="left:789px;top:673.7px;width:91px;overflow:hidden;letter-spacing:0.27px">PotPlayer</div>
<div class="pbar" style="top:675.1px;height:14.2px"><div class="pfill" style="width:2.6px;background:#e8d222"></div><div class="ptxt" style="left:4.8px">0.6%</div></div>
<div class="cellr" style="left:966px;top:673.4px">0:00:57</div>
<div class="t" style="left:979px;top:704.5px;font-size:12.4px;line-height:14px;color:#111;font-weight:400">总计: 2:51:23</div>
<div class="a" style="left:0;top:734px;width:1080px;height:57px;background:#fff"></div>
<div class="t" style="left:12px;top:741px;font-size:15px;line-height:18px;color:#4a4a4a;font-weight:300;letter-spacing:0.3px">筛选... <span style="color:#6a6a6a">(<span style="color:#5a86a8;text-decoration:underline">?</span>)</span></div>
<div class="a" style="left:85.5px;top:737px;width:986px;height:25.2px;border:1px solid #7b99aa;background:#fff"></div>
<svg class="a" style="left:1059px;top:747px" width="8" height="5" viewBox="0 0 9 6" fill="none" stroke="#777" stroke-width="1.2"><path d="M1 1 L4.5 4.6 L8 1"/></svg>
<div class="a" style="left:12px;top:768.2px;width:15.2px;height:15.2px;border-radius:50%;background:#5fc32b"></div>
<div class="t" style="left:30.5px;top:770px;font-size:11.75px;line-height:13px;color:#686868">时间追踪器运行中</div>
<div class="a" style="left:134px;top:765.5px;width:1.2px;height:20.5px;background:#1f3e55"></div>
<div class="t" style="left:1002.5px;top:770.5px;font-size:11.6px;line-height:12px;color:#6a6a6a">2024.2.0.6</div>
<div class="a" style="left:953.5px;top:759px;width:21px;height:21px;border-radius:50%;border:1.4px solid #fff;box-shadow:0 0 1.6px rgba(60,60,60,.5),inset 0 0 1.6px rgba(60,60,60,.4)"></div>
<div class="t" style="left:957px;top:762px;font-size:14px;line-height:15px;color:#fff;font-weight:400;text-shadow:0 0 1.2px rgba(60,60,60,.55),0 0 2.5px rgba(90,90,90,.25)">值</div>
<div class="t" style="left:984.5px;top:759.5px;font-size:17.2px;line-height:19px;color:#fff;font-weight:400;transform:scaleY(1.16) skewX(-7deg);transform-origin:0 50%;text-shadow:0 0 1.2px rgba(60,60,60,.55),0 0 2.5px rgba(90,90,90,.25)">什么值得买</div>
<div class="a" style="left:1073px;top:785px;width:1.6px;height:1.6px;background:#b5c4cf"></div><div class="a" style="left:1073px;top:782px;width:1.6px;height:1.6px;background:#b5c4cf"></div><div class="a" style="left:1073px;top:779px;width:1.6px;height:1.6px;background:#b5c4cf"></div><div class="a" style="left:1070px;top:785px;width:1.6px;height:1.6px;background:#b5c4cf"></div><div class="a" style="left:1070px;top:782px;width:1.6px;height:1.6px;background:#b5c4cf"></div><div class="a" style="left:1067px;top:785px;width:1.6px;height:1.6px;background:#b5c4cf"></div>
<div class="a" style="left:0;top:0;width:1080px;height:1px;background:#3b6f8e"></div>
<div class="a" style="left:0;top:0;width:1.4px;height:791px;background:#3b6f8e"></div>
<div class="a" style="left:1078px;top:0;width:2px;height:791px;background:#2d6690"></div>
<div class="a" style="left:0;top:789px;width:1080px;height:2px;background:#3d6482"></div>
</body></html>
